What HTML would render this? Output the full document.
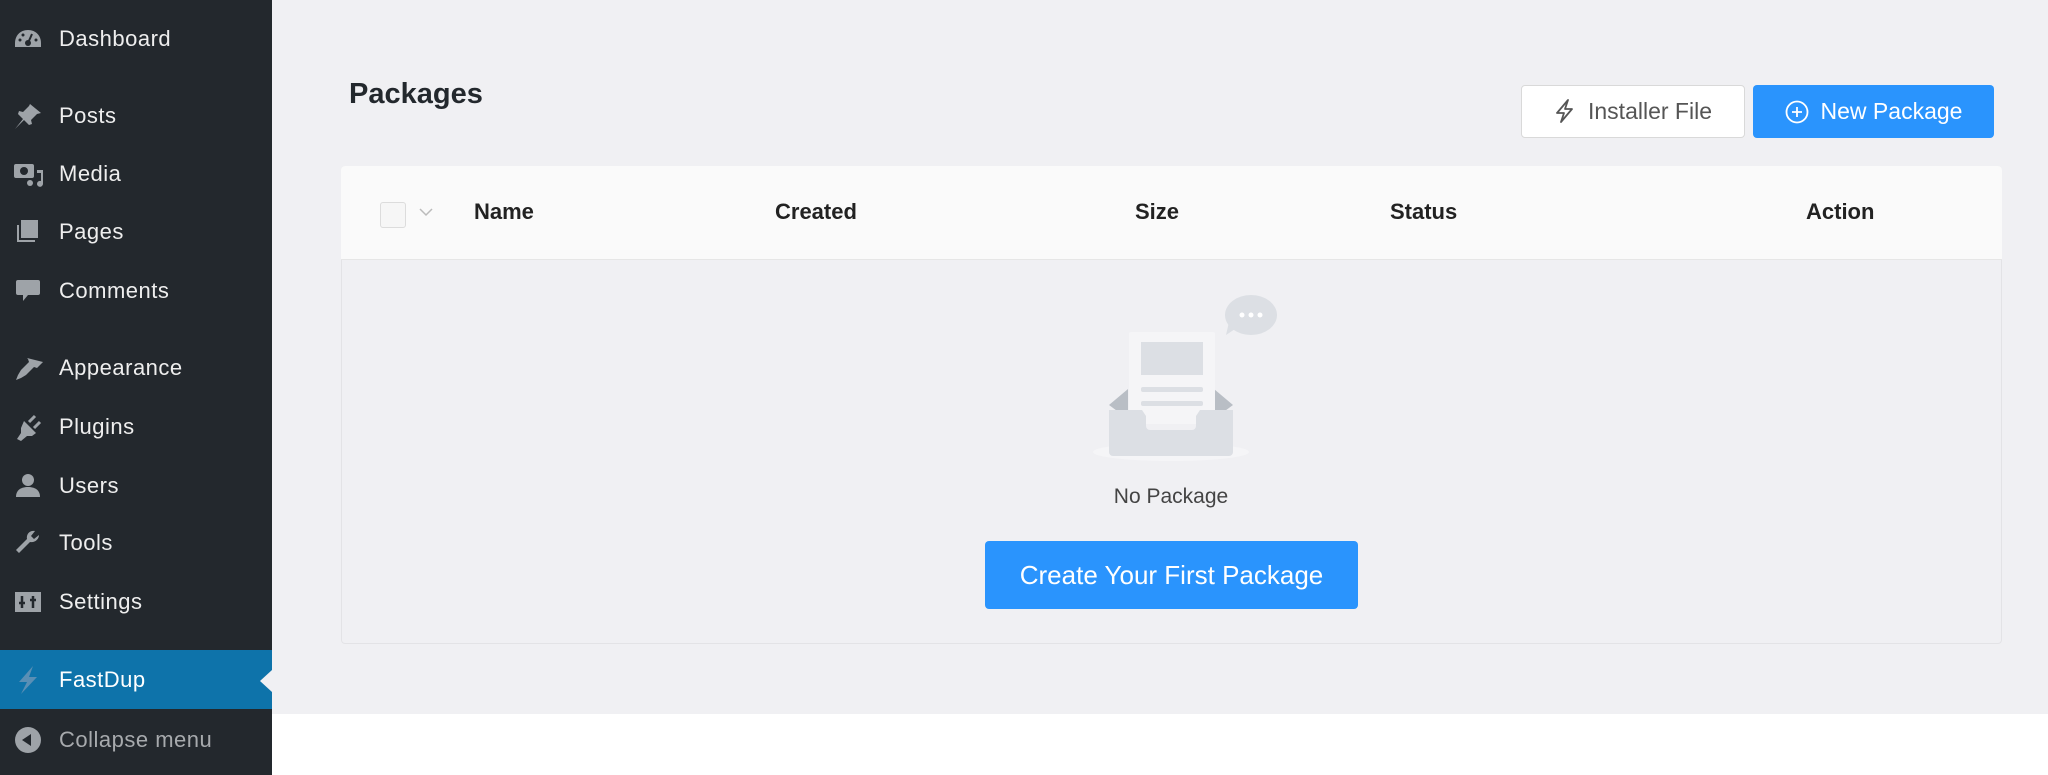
<!DOCTYPE html>
<html><head><meta charset="utf-8"><style>
*{margin:0;padding:0;box-sizing:border-box}
body{width:2048px;height:775px;background:#fff;font-family:"Liberation Sans",Arial,sans-serif;position:relative;overflow:hidden}
#side{position:absolute;left:0;top:0;width:272px;height:775px;background:#23282d}
.mi{position:absolute;left:0;width:272px;height:40px;color:#eee;font-size:22px;letter-spacing:.5px}
.mi span{position:absolute;left:59px;top:50%;transform:translateY(-50%)}
.mi svg{position:absolute;left:13px;top:50%;transform:translateY(-50%)}
#main{position:absolute;left:272px;top:0;width:1776px;height:714px;background:#f0f0f3}
.abs{position:absolute}
.th{position:absolute;top:200px;font-size:22px;font-weight:bold;color:#222;transform:translateY(-50%)}
</style></head><body>
<div id="side">
 <div class="mi" style="top:19px"><svg width="30" height="24" viewBox="0 0 30 24"><path d="M15 3C7 3 2 9 2 16v4h26v-4C28 9 23 3 15 3z" fill="#9ea3a8"/><circle cx="15" cy="16" r="3" fill="#23282d"/><path d="M15 16l4-9" stroke="#23282d" stroke-width="2"/><circle cx="7" cy="13" r="1.5" fill="#23282d"/><circle cx="10" cy="8" r="1.5" fill="#23282d"/><circle cx="23" cy="13" r="1.5" fill="#23282d"/></svg><span>Dashboard</span></div>
 <div class="mi" style="top:96px"><svg width="30" height="28" viewBox="0 0 30 28"><path d="M17 2l11 9-4 1-6 6 1 4-3 1-5-5-9 9 8-10-5-5 1-3 4 1 6-6z" fill="#9ea3a8"/></svg><span>Posts</span></div>
 <div class="mi" style="top:154px"><svg width="32" height="28" viewBox="0 0 32 28"><rect x="1" y="4" width="20" height="14" rx="2" fill="#9ea3a8"/><circle cx="11" cy="11" r="4" fill="#23282d"/><path d="M24 10h6v14a3 3 0 1 1-2-3V13h-4z" fill="#9ea3a8"/><circle cx="17" cy="23" r="3" fill="#9ea3a8"/></svg><span>Media</span></div>
 <div class="mi" style="top:212px"><svg width="30" height="28" viewBox="0 0 30 28"><rect x="8" y="2" width="17" height="18" fill="#9ea3a8"/><path d="M4 7h2v15h16v2H4z" fill="#9ea3a8"/></svg><span>Pages</span></div>
 <div class="mi" style="top:271px"><svg width="30" height="28" viewBox="0 0 30 28"><path d="M5 3h20a2 2 0 0 1 2 2v11a2 2 0 0 1-2 2H15l-5 6v-6H5a2 2 0 0 1-2-2V5a2 2 0 0 1 2-2z" fill="#9ea3a8"/></svg><span>Comments</span></div>
 <div class="mi" style="top:348px"><svg width="32" height="28" viewBox="0 0 32 28"><path d="M14 4l16 4-6 6-3-1-8 8-5 3-5 2 2-5 3-5 8-8-1-3z" fill="#9ea3a8"/></svg><span>Appearance</span></div>
 <div class="mi" style="top:407px"><svg width="30" height="28" viewBox="0 0 30 28"><path d="M22 3l-6 6M27 9l-6 6" stroke="#9ea3a8" stroke-width="3"/><path d="M11 8l12 12-4 3-5 0-6 5-4-2 4-6 0-5z" fill="#9ea3a8"/></svg><span>Plugins</span></div>
 <div class="mi" style="top:466px"><svg width="30" height="28" viewBox="0 0 30 28"><circle cx="15" cy="8" r="6" fill="#9ea3a8"/><path d="M3 25c0-7 5-10 12-10s12 3 12 10z" fill="#9ea3a8"/></svg><span>Users</span></div>
 <div class="mi" style="top:523px"><svg width="30" height="28" viewBox="0 0 30 28"><path d="M26 6l-5 4-3-3 4-5c-5-1-9 3-8 8L3 21l3 3 11-11c5 1 9-3 9-7z" fill="#9ea3a8"/></svg><span>Tools</span></div>
 <div class="mi" style="top:582px"><svg width="30" height="28" viewBox="0 0 30 28"><rect x="2" y="4" width="26" height="20" fill="#9ea3a8"/><path d="M9 8v12M6 15h6M20 8v12M17 12h6" stroke="#23282d" stroke-width="2.5"/></svg><span>Settings</span></div>
 <div class="abs" style="left:0;top:650px;width:272px;height:59px;background:#0e73aa"></div>
 <div class="mi" style="top:660px;color:#fff"><svg width="30" height="32" viewBox="0 0 30 32"><path d="M20 2L6 18h8l-6 12 16-17h-8z" fill="#5a8fb5"/></svg><span>FastDup</span></div>
 <div class="abs" style="left:260px;top:670px;width:0;height:0;border-top:11px solid transparent;border-bottom:11px solid transparent;border-right:12px solid #f0f0f3"></div>
 <div class="mi" style="top:720px;color:#a7aaad"><svg width="30" height="30" viewBox="0 0 30 30"><circle cx="15" cy="15" r="13" fill="#9ea3a8"/><path d="M18 9v12l-9-6z" fill="#23282d"/></svg><span>Collapse menu</span></div>
</div>
<div id="main">
 <div class="abs" style="left:77px;top:78px;font-size:29px;font-weight:bold;color:#23282d">Packages</div>
 <div class="abs" style="left:1249px;top:85px;width:224px;height:53px;background:#fff;border:1px solid #d9d9d9;border-radius:4px"></div>
 <div class="abs" style="left:1249px;top:85px;width:224px;height:53px;font-size:23px;color:#555;line-height:53px;text-align:center"><svg width="22" height="24" viewBox="0 0 22 24" style="vertical-align:-4px;margin-right:12px"><path d="M14 1L3 14h7l-3 9 11-13h-7z" fill="none" stroke="#555" stroke-width="1.8" stroke-linejoin="round"/></svg>Installer File</div>
 <div class="abs" style="left:1481px;top:85px;width:241px;height:53px;background:#2a94fd;border-radius:4px;font-size:23px;color:#fff;line-height:53px;text-align:center"><svg width="24" height="24" viewBox="0 0 24 24" style="vertical-align:-5px;margin-right:12px"><circle cx="12" cy="12" r="10.5" fill="none" stroke="#fff" stroke-width="1.8"/><path d="M12 7v10M7 12h10" stroke="#fff" stroke-width="1.8"/></svg>New Package</div>
 <div class="abs" style="left:69px;top:166px;width:1661px;height:478px;border:1px solid #e3e3e6;border-radius:4px;background:#f0f0f3"></div>
 <div class="abs" style="left:69px;top:166px;width:1661px;height:94px;background:#fafafa;border-bottom:1px solid #e6e6e6;border-radius:4px 4px 0 0"></div>
 <div class="abs" style="left:108px;top:202px;width:26px;height:26px;border:1px solid #dcdcdc;border-radius:3px;background:#f6f6f6"></div>
 <svg class="abs" style="left:146px;top:206px" width="16" height="12" viewBox="0 0 16 12"><path d="M2 3l6 6 6-6" fill="none" stroke="#bbb" stroke-width="1.5"/></svg>
 <div class="th" style="left:202px;top:212px">Name</div>
 <div class="th" style="left:503px;top:212px">Created</div>
 <div class="th" style="left:863px;top:212px">Size</div>
 <div class="th" style="left:1118px;top:212px">Status</div>
 <div class="th" style="left:1534px;top:212px">Action</div>
 <svg class="abs" style="left:821px;top:290px" width="200" height="180" viewBox="1093 290 200 180"><ellipse cx="1171" cy="452" rx="78" ry="9" fill="#f5f5f7"/><path d="M1109 405l19-16v30zM1233 405l-19-16v30z" fill="#b9bec5"/><rect x="1129" y="332" width="86" height="92" rx="2" fill="#f5f5f7"/><rect x="1141" y="342" width="62" height="33" fill="#dcdfe4"/><rect x="1141" y="387" width="62" height="5" rx="2" fill="#dcdfe4"/><rect x="1141" y="401" width="62" height="5" rx="2" fill="#dcdfe4"/><path d="M1109 410h33l4 6v10a4 4 0 0 0 4 4h42a4 4 0 0 0 4-4v-10l4-6h33v42a4 4 0 0 1-4 4h-116a4 4 0 0 1-4-4z" fill="#dcdfe4"/><ellipse cx="1251" cy="315" rx="26" ry="20" fill="#dcdfe4"/><path d="M1229 322l-3 13 12-8z" fill="#dcdfe4"/><circle cx="1242" cy="315" r="2.5" fill="#fff"/><circle cx="1251" cy="315" r="2.5" fill="#fff"/><circle cx="1260" cy="315" r="2.5" fill="#fff"/></svg>
 <div class="abs" style="left:688px;top:485px;width:422px;text-align:center;font-size:21px;color:#444">No Package</div>
 <div class="abs" style="left:713px;top:541px;width:373px;height:68px;background:#2a94fd;border-radius:4px;color:#fff;font-size:26px;line-height:68px;text-align:center">Create Your First Package</div>
</div>
</body></html>
